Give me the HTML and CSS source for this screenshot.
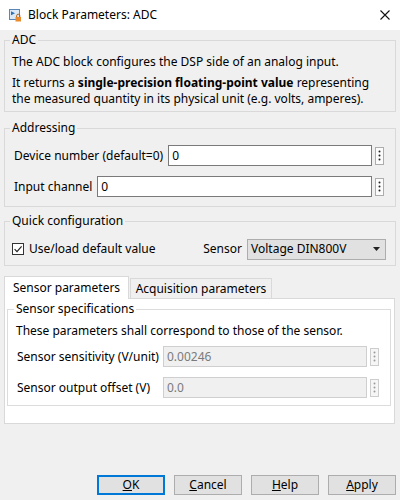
FILE: index.html
```html
<!DOCTYPE html>
<html lang="en">
<head>
<meta charset="utf-8">
<title>Block Parameters: ADC</title>
<link rel="stylesheet" href="styles.css">
</head>
<body>
<div class="window">
  <header class="titlebar">
    <svg class="app-icon" viewBox="0 0 14 14" width="14" height="14" aria-hidden="true">
      <rect x="1.5" y="1.5" width="10" height="10" fill="#dce8f4" stroke="#5a86b6"/>
      <path d="M3 3.2 L7 5.2 L3 7.2 Z" fill="#2f6db5"/>
      <path d="M8.6 9 V7.8 a1.6 1.6 0 0 1 3.2 0 V9" fill="none" stroke="#b35f17" stroke-width="1"/>
      <rect x="7.5" y="9" width="5.5" height="4.5" fill="#e98b2c"/>
    </svg>
    <span class="title">Block Parameters: ADC</span>
    <svg class="close" viewBox="0 0 10 10" width="10" height="10" aria-hidden="true">
      <path d="M0.5 0.5 L9.5 9.5 M9.5 0.5 L0.5 9.5" stroke="#111" stroke-width="1.1"/>
    </svg>
  </header>

  <main class="content">
    <fieldset class="group desc">
      <legend>ADC</legend>
      <p class="first">The ADC block configures the DSP side of an analog input.</p>
      <p>It returns a <b>single-precision floating-point value</b> representing<br>the measured quantity in its physical unit (e.g. volts, amperes).</p>
    </fieldset>

    <fieldset class="group addressing">
      <legend>Addressing</legend>
      <div class="field-row">
        <label class="field-label" for="dev">Device number (default=0)</label>
        <input id="dev" class="edit" type="text" value="0">
        <span class="more"><svg viewBox="0 0 3 11" width="3" height="11"><circle cx="1.5" cy="1.5" r="1"/><circle cx="1.5" cy="5.5" r="1"/><circle cx="1.5" cy="9.5" r="1"/></svg></span>
      </div>
      <div class="field-row">
        <label class="field-label" for="chan">Input channel</label>
        <input id="chan" class="edit" type="text" value="0">
        <span class="more"><svg viewBox="0 0 3 11" width="3" height="11"><circle cx="1.5" cy="1.5" r="1"/><circle cx="1.5" cy="5.5" r="1"/><circle cx="1.5" cy="9.5" r="1"/></svg></span>
      </div>
    </fieldset>

    <fieldset class="group quick">
      <legend>Quick configuration</legend>
      <div class="quick-row">
        <label class="check">
          <svg class="checkbox" viewBox="0 0 12 12" width="12" height="12" aria-hidden="true">
            <rect x="0.5" y="0.5" width="11" height="11" fill="#fff" stroke="#333"/>
            <path d="M2.6 6.2 L5 8.6 L9.6 3.4" fill="none" stroke="#222" stroke-width="1.2"/>
          </svg>
          <span>Use/load default value</span>
        </label>
        <div class="sensor">
          <span class="sensor-label">Sensor</span>
          <div class="combo">
            <span>Voltage DIN800V</span>
            <svg viewBox="0 0 7 4" width="7" height="4" aria-hidden="true"><path d="M0 0 H7 L3.5 4 Z" fill="#222"/></svg>
          </div>
        </div>
      </div>
    </fieldset>

    <section class="tabs">
      <div class="tabstrip">
        <div class="tab active tab-sensor">Sensor parameters</div>
        <div class="tab tab-acq">Acquisition parameters</div>
      </div>
      <div class="tabpane">
        <fieldset class="group spec">
          <legend>Sensor specifications</legend>
          <p class="first">These parameters shall correspond to those of the sensor.</p>
          <div class="spec-grid">
            <label class="field-label">Sensor sensitivity (V/unit)</label>
            <input class="edit" type="text" value="0.00246" disabled>
            <span class="more off"><svg viewBox="0 0 3 11" width="3" height="11"><circle cx="1.5" cy="1.5" r="1"/><circle cx="1.5" cy="5.5" r="1"/><circle cx="1.5" cy="9.5" r="1"/></svg></span>
            <label class="field-label">Sensor output offset (V)</label>
            <input class="edit" type="text" value="0.0" disabled>
            <span class="more off"><svg viewBox="0 0 3 11" width="3" height="11"><circle cx="1.5" cy="1.5" r="1"/><circle cx="1.5" cy="5.5" r="1"/><circle cx="1.5" cy="9.5" r="1"/></svg></span>
          </div>
        </fieldset>
      </div>
    </section>

    <footer class="buttons">
      <button class="btn default"><u>O</u>K</button>
      <button class="btn"><u>C</u>ancel</button>
      <button class="btn"><u>H</u>elp</button>
      <button class="btn"><u>A</u>pply</button>
    </footer>
  </main>
</div>
</body>
</html>
```

FILE: styles.css
```css
* {
  box-sizing: border-box;
}

html,
body {
  margin: 0;
  height: 100%;
}

body {
  font-family: "Noto Sans", "Open Sans", sans-serif;
  font-size: 12px;
  line-height: 16px;
  color: #000;
  background: #f0f0f0;
}

.window {
  height: 100vh;
  display: flex;
  flex-direction: column;
}

/* Title bar */
.titlebar {
  flex: none;
  height: 30px;
  background: #fff;
  display: flex;
  align-items: center;
  padding: 0 10px 0 8px;
}

.app-icon {
  margin-right: 6px;
}

.close {
  margin-left: auto;
}

/* Dialog body */
.content {
  flex: 1;
  display: flex;
  flex-direction: column;
  padding: 2px 4px 5px;
}

.group {
  margin: 0;
  min-width: 0;
  border: 1px solid #d9d9d9;
  padding: 0 7px 4px;
}

.group legend {
  padding: 0 2px;
  margin-left: -2px;
  line-height: 16px;
}

.group p {
  margin: 5px 0 0;
  white-space: nowrap;
}

.group p.first {
  margin-top: 6px;
}

.addressing {
  margin-top: 8px;
  padding-bottom: 9px;
}

.field-row {
  display: flex;
  align-items: center;
  margin: 9px 4px 0 2px;
}

.field-row + .field-row {
  margin-top: 10px;
}

.field-label {
  flex: none;
  white-space: nowrap;
}

.field-row .field-label {
  margin-right: 5px;
}

.edit {
  flex: 1;
  min-width: 0;
  height: 21px;
  margin: 0;
  padding: 0 3px;
  border: 1px solid #7a7a7a;
  background: #fff;
  font: inherit;
  color: #000;
  outline: none;
}

.edit:disabled {
  background: #f0f0f0;
  border-color: #cfcfcf;
  color: #7b7b7b;
}

.more {
  flex: none;
  width: 9px;
  height: 18px;
  margin-left: 3px;
  border: 1px solid #adadad;
  background: #fcfcfc;
  display: flex;
  align-items: center;
  justify-content: center;
}

.more svg {
  fill: #222;
}

.more.off {
  border-color: #cdcdcd;
  background: #f6f6f6;
}

.more.off svg {
  fill: #9a9a9a;
}

/* Quick configuration */
.quick {
  margin-top: 6px;
  padding-bottom: 6px;
}

.quick-row {
  display: flex;
  align-items: center;
  justify-content: space-between;
  margin: 10px 2px 0 0;
  height: 20px;
}

.check {
  display: flex;
  align-items: center;
}

.checkbox {
  margin-right: 5px;
}

.sensor {
  display: flex;
  align-items: center;
}

.sensor-label {
  margin-right: 5px;
}

.combo {
  width: 139px;
  height: 21px;
  border: 1px solid #adadad;
  background: #e1e1e1;
  display: flex;
  align-items: center;
  justify-content: space-between;
  padding: 0 5px 0 3px;
}

/* Tabs */
.tabs {
  margin-top: 10px;
  flex: none;
}

.tabstrip {
  position: relative;
  z-index: 1;
  display: flex;
  align-items: flex-end;
  height: 23px;
  margin-bottom: -1px;
}

.tab {
  height: 21px;
  padding: 0;
  border: 1px solid #d9d9d9;
  background: #f0f0f0;
  display: flex;
  align-items: center;
  justify-content: center;
  white-space: nowrap;
  margin-left: 1px;
}

.tab-sensor {
  width: 125px;
}

.tab-acq {
  width: 142px;
}

.tab.active {
  height: 23px;
  margin-left: 0;
  background: #fff;
  border-bottom: none;
  padding-bottom: 1px;
}

.tabpane {
  background: #fff;
  border: 1px solid #d9d9d9;
  margin-right: 1px;
  padding: 2px 3px 17px 2px;
}

.spec {
  padding: 0 8px 7px;
  border-color: #dcdcdc;
}

.spec legend {
  background: #fff;
}

.spec-grid {
  display: grid;
  grid-template-columns: auto 1fr auto;
  align-items: center;
  column-gap: 4px;
  row-gap: 10px;
  margin: 7px 3px 0 1px;
}

.spec-grid .edit {
  width: 100%;
}

.spec-grid .more {
  margin-left: -1px;
}

/* Dialog buttons */
.buttons {
  margin-top: auto;
  display: flex;
  justify-content: flex-end;
  gap: 9px;
}

.btn {
  width: 68px;
  height: 20px;
  margin: 0;
  padding: 0;
  border: 1px solid #adadad;
  background: #e1e1e1;
  font: inherit;
  color: #000;
  line-height: 16px;
}

.btn.default {
  border: 2px solid #0078d7;
}
```
